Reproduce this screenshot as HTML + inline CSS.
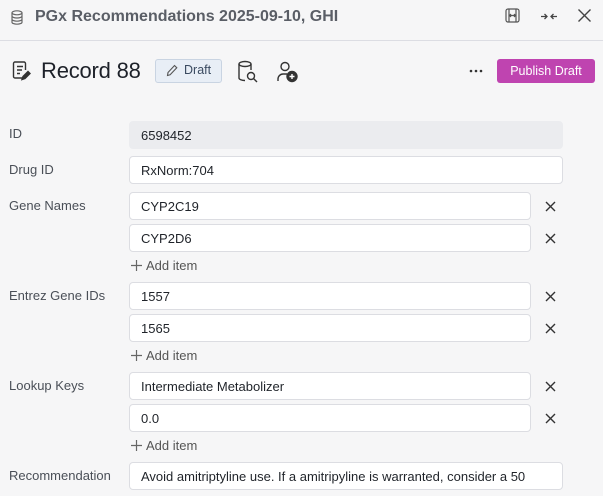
<!DOCTYPE html>
<html><head><meta charset="utf-8"><style>
*{box-sizing:border-box;margin:0;padding:0}
body{width:603px;height:496px;overflow:hidden;background:#f6f6f7;font-family:"Liberation Sans",sans-serif;color:#2b2f36;position:relative}
.a{position:absolute}
.lbl{position:absolute;left:9px;font-size:13px;color:#4a4f57}
.inp{position:absolute;left:129px;height:28px;background:#fff;border:1px solid #dcdde2;border-radius:4px;font-size:13px;padding:6px 11px;color:#1f2329;white-space:nowrap;overflow:hidden}
.x{position:absolute;left:545px;width:11px;height:11px}
.add{position:absolute;left:131px;font-size:13px;color:#555}
.add svg{position:relative;top:1px;margin-right:4px}
</style></head><body>
<svg class="a" style="left:11px;top:10px" width="12" height="15" viewBox="0 0 12 15" fill="none" stroke="#666" stroke-width="1.2"><ellipse cx="6" cy="2.8" rx="5" ry="2"/><path d="M1 2.8v9.4c0 1.1 2.2 2 5 2s5-.9 5-2V2.8M1 6c0 1.1 2.2 2 5 2s5-.9 5-2M1 9.2c0 1.1 2.2 2 5 2s5-.9 5-2"/></svg>
<div class="a" style="left:35px;top:8px;font-size:16px;font-weight:bold;color:#5a5e66">PGx Recommendations 2025-09-10, GHI</div>
<svg class="a" style="left:505px;top:8px" width="15" height="15" viewBox="0 0 15 15" fill="none" stroke="#555" stroke-width="1.2"><rect x="1" y="1" width="13" height="13" rx="2"/><path d="M4 1v13M11 1v13M5 7.5h5M6 6l-1.5 1.5L6 9M9 6l1.5 1.5L9 9"/></svg>
<svg class="a" style="left:541px;top:12px" width="16" height="9" viewBox="0 0 16 9" fill="none" stroke="#444" stroke-width="1.3"><path d="M0 4.5h5.5M3.5 2l2.5 2.5L3.5 7M16 4.5h-5.5M12.5 2L10 4.5 12.5 7"/></svg>
<svg class="a" style="left:578px;top:9px" width="13" height="13" viewBox="0 0 13 13" stroke="#444" stroke-width="1.4"><path d="M.5.5l12 12M12.5.5l-12 12"/></svg>
<div class="a" style="left:0;top:40px;width:603px;height:1px;background:#dcdde3"></div>
<svg class="a" style="left:12px;top:61px" width="19" height="20" viewBox="0 0 19 20" fill="none" stroke="#333" stroke-width="1.4"><path d="M12 17H3a1.5 1.5 0 0 1-1.5-1.5v-13A1.5 1.5 0 0 1 3 1h9a1.5 1.5 0 0 1 1.5 1.5V9"/><path d="M5 5.5h6M5 9h5M5 12.5h3"/><path d="M10 18.5l1-3 5-5 2 2-5 5z" fill="#333"/></svg>
<div class="a" style="left:41px;top:58px;font-size:22px;color:#1d2129;font-weight:normal;letter-spacing:-0.2px">Record 88</div>
<div class="a" style="left:155px;top:59px;width:67px;height:24px;border:1px solid #c9d4e2;background:#e8eef6;border-radius:3px"></div>
<svg class="a" style="left:166px;top:64px" width="12" height="13" viewBox="0 0 12 13" fill="none" stroke="#555" stroke-width="1.1"><path d="M1.5 11.5l.5-3 6.5-7 2.3 2.3-6.7 7z"/></svg>
<div class="a" style="left:184px;top:63px;font-size:12.5px;color:#3a4a60">Draft</div>
<svg class="a" style="left:237px;top:60px" width="22" height="24" viewBox="0 0 22 24" fill="none" stroke="#333" stroke-width="1.4"><ellipse cx="8" cy="4" rx="6" ry="2.5"/><path d="M2 4v14c0 1.4 2.7 2.5 6 2.5M14 4v6"/><circle cx="14" cy="16" r="3.5"/><path d="M16.5 18.5L20 22"/></svg>
<svg class="a" style="left:276px;top:61px" width="24" height="22" viewBox="0 0 24 22" fill="none" stroke="#333" stroke-width="1.4"><circle cx="9" cy="5.5" r="4"/><path d="M2 20v-2a5 5 0 0 1 5-5h4"/><circle cx="16" cy="15.5" r="5" fill="#333"/><path d="M16 13v5M13.5 15.5h5" stroke="#fff"/></svg>
<svg class="a" style="left:469px;top:69px" width="14" height="4" viewBox="0 0 14 4" fill="#333"><circle cx="2" cy="2" r="1.3"/><circle cx="7" cy="2" r="1.3"/><circle cx="12" cy="2" r="1.3"/></svg>
<div class="a" style="left:497px;top:59px;width:98px;height:24px;background:#bf44b0;border-radius:3px;color:#fff;font-size:12.5px;text-align:center;line-height:24px">Publish Draft</div>

<div class="lbl" style="top:126px">ID</div>
<div class="inp" style="top:121px;width:434px;background:#ebecef;border-color:#ebecef">6598452</div>
<div class="lbl" style="top:162px">Drug ID</div>
<div class="inp" style="top:156px;width:434px">RxNorm:704</div>
<div class="lbl" style="top:198px">Gene Names</div>
<div class="inp" style="top:192px;width:402px">CYP2C19</div><svg class="x" style="top:201px" viewBox="0 0 11 11" stroke="#333" stroke-width="1.4"><path d="M1 1l9 9M10 1l-9 9"/></svg>
<div class="inp" style="top:224px;width:402px">CYP2D6</div><svg class="x" style="top:233px" viewBox="0 0 11 11" stroke="#333" stroke-width="1.4"><path d="M1 1l9 9M10 1l-9 9"/></svg>
<div class="add" style="top:258px"><svg width="11" height="11" viewBox="0 0 11 11" stroke="#666" stroke-width="1.2"><path d="M5.5 0v11M0 5.5h11"/></svg>Add item</div>
<div class="lbl" style="top:288px">Entrez Gene IDs</div>
<div class="inp" style="top:282px;width:402px">1557</div><svg class="x" style="top:291px" viewBox="0 0 11 11" stroke="#333" stroke-width="1.4"><path d="M1 1l9 9M10 1l-9 9"/></svg>
<div class="inp" style="top:314px;width:402px">1565</div><svg class="x" style="top:323px" viewBox="0 0 11 11" stroke="#333" stroke-width="1.4"><path d="M1 1l9 9M10 1l-9 9"/></svg>
<div class="add" style="top:348px"><svg width="11" height="11" viewBox="0 0 11 11" stroke="#666" stroke-width="1.2"><path d="M5.5 0v11M0 5.5h11"/></svg>Add item</div>
<div class="lbl" style="top:378px">Lookup Keys</div>
<div class="inp" style="top:372px;width:402px">Intermediate Metabolizer</div><svg class="x" style="top:381px" viewBox="0 0 11 11" stroke="#333" stroke-width="1.4"><path d="M1 1l9 9M10 1l-9 9"/></svg>
<div class="inp" style="top:404px;width:402px">0.0</div><svg class="x" style="top:413px" viewBox="0 0 11 11" stroke="#333" stroke-width="1.4"><path d="M1 1l9 9M10 1l-9 9"/></svg>
<div class="add" style="top:438px"><svg width="11" height="11" viewBox="0 0 11 11" stroke="#666" stroke-width="1.2"><path d="M5.5 0v11M0 5.5h11"/></svg>Add item</div>
<div class="lbl" style="top:468px">Recommendation</div>
<div class="inp" style="top:462px;width:434px">Avoid amitriptyline use. If a amitripyline is warranted, consider a 50</div>
</body></html>
